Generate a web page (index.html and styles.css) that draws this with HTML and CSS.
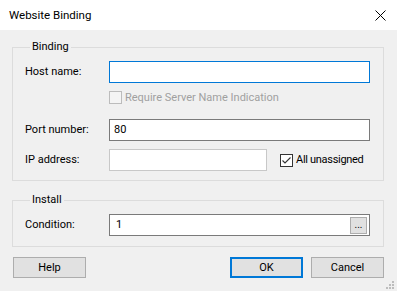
FILE: index.html
```html
<!DOCTYPE html>
<html>
<head>
<meta charset="utf-8">
<link rel="stylesheet" href="styles.css">
</head>
<body>
<div class="window">
  <div class="titlebar">
    <span class="title">Website Binding</span>
    <svg class="close" width="11" height="11" viewBox="0 0 11 11"><path d="M0.5 0.5 L10.5 10.5 M10.5 0.5 L0.5 10.5" stroke="#000" stroke-width="1" fill="none"/></svg>
  </div>
  <div class="content">
    <fieldset class="group group-binding">
      <legend>Binding</legend>
      <div class="row row-host">
        <span class="label">Host name:</span>
        <div class="field field-focus"></div>
      </div>
      <div class="row row-sni">
        <span class="check check-disabled"></span>
        <span class="check-text disabled">Require Server Name Indication</span>
      </div>
      <div class="row row-port">
        <span class="label">Port number:</span>
        <div class="field field-dark">80</div>
      </div>
      <div class="row row-ip">
        <span class="label">IP address:</span>
        <div class="field field-light field-ip"></div>
        <svg class="checkbox" width="13" height="13" viewBox="0 0 13 13"><rect x="0.5" y="0.5" width="12" height="12" fill="#fff" stroke="#333"/><path d="M2.5 6.5 L5 9 L10.5 3.5" stroke="#333" stroke-width="1.1" fill="none"/></svg>
        <span class="check-text check-all">All unassigned</span>
      </div>
    </fieldset>
    <fieldset class="group group-install">
      <legend>Install</legend>
      <div class="row row-cond">
        <span class="label">Condition:</span>
        <div class="field field-dark field-cond">
          <span>1</span>
          <span class="browse">...</span>
        </div>
      </div>
    </fieldset>
    <div class="footer">
      <span class="btn btn-help">Help</span>
      <span class="spacer"></span>
      <span class="btn btn-default">OK</span>
      <span class="btn">Cancel</span>
    </div>
  </div>
  <svg class="grip" width="10" height="10" viewBox="0 0 10 10"><g fill="#bdbdbd"><rect x="7" y="1" width="2" height="2"/><rect x="4" y="4" width="2" height="2"/><rect x="7" y="4" width="2" height="2"/><rect x="1" y="7" width="2" height="2"/><rect x="4" y="7" width="2" height="2"/><rect x="7" y="7" width="2" height="2"/></g></svg>
</div>
</body>
</html>
```
FILE: styles.css
```css
* { box-sizing: border-box; }
html, body { margin: 0; padding: 0; }
body {
  width: 397px;
  height: 291px;
  overflow: hidden;
  background: #f0f0f0;
  font-family: "Roboto", "Liberation Sans", sans-serif;
  font-size: 11px;
  color: #000;
}
.window { position: relative; width: 397px; height: 291px; }
.titlebar {
  height: 30px;
  background: #fff;
  display: flex;
  align-items: center;
  justify-content: space-between;
  padding: 0 11px 0 9px;
}
.title { font-size: 11.5px; line-height: 16px; }
.close { display: block; }
.content { padding: 0 13px 0 12px; }
.group {
  margin: 0;
  padding: 0 13px 0 12px;
  border: 1px solid #dcdcdc;
  min-width: 0;
}
.group legend {
  padding: 0 2px;
  margin-left: 5px;
  line-height: 16px;
  height: 16px;
}
.group-binding { margin-top: 9px; padding-top: 6px; padding-bottom: 9px; }
.group-install { margin-top: 11px; padding-top: 6px; padding-bottom: 10px; }
.row { display: flex; align-items: center; }
.label { width: 84px; flex: none; line-height: 16px; }
.field {
  height: 22px;
  flex: 1;
  background: #fff;
  border: 1px solid #7a7a7a;
  display: flex;
  align-items: center;
  padding: 0 2px 0 4px;
  line-height: 16px;
}
.field-focus { border-color: #0078d7; }
.field-light { border-color: #c8c8c8; }
.field-ip { flex: none; width: 158px; }
.row-sni { margin-top: 8px; padding-left: 84px; height: 13px; }
.row-port { margin-top: 15px; }
.row-ip { margin-top: 8px; }
.check {
  width: 13px; height: 13px; flex: none;
  border: 1px solid #bcbcbc;
  background: #f4f4f4;
}
.check-text { margin-left: 3px; line-height: 16px; white-space: nowrap; }
.check-all { letter-spacing: -0.3px; }
.disabled { color: #a0a0a0; }
.checkbox { display: block; flex: none; margin-left: 13px; }
.field-cond { justify-content: space-between; padding-left: 6px; }
.browse {
  width: 17px; height: 17px;
  background: #e1e1e1;
  border: 1px solid #adadad;
  display: flex;
  align-items: flex-end;
  justify-content: center;
  line-height: 12px;
  font-size: 10px;
  padding-bottom: 2px;
}
.footer { display: flex; margin-top: 10px; padding-left: 1px; gap: 8px; }
.spacer { flex: 1; }
.btn {
  width: 73px;
  height: 21px;
  background: #e1e1e1;
  border: 1px solid #adadad;
  display: flex;
  align-items: center;
  justify-content: center;
  line-height: 16px;
}
.btn-default { border: 2px solid #0078d7; }
.grip { position: absolute; right: 2px; bottom: 1px; display: block; }
```
